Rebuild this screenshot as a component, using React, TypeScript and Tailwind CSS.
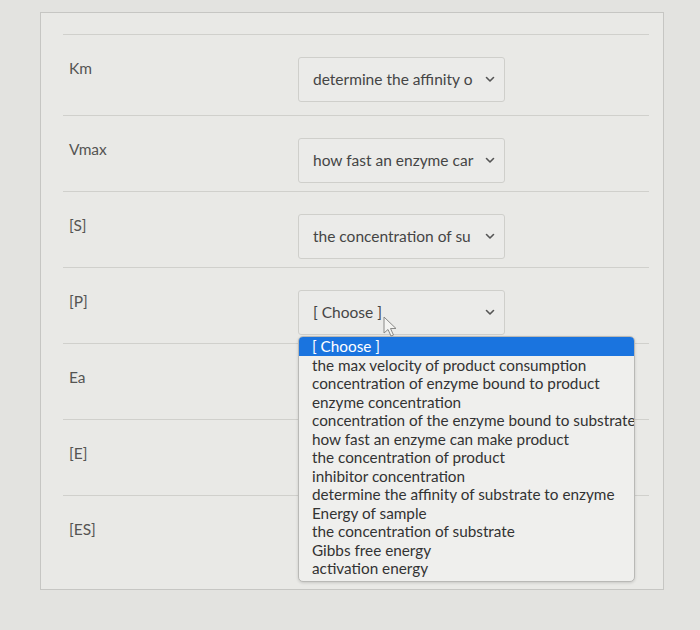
import React from "react";

const rows = [
  { label: "Km", value: "determine the affinity o" },
  { label: "Vmax", value: "how fast an enzyme car" },
  { label: "[S]", value: "the concentration of su" },
  { label: "[P]", value: "[ Choose ]", open: true },
  { label: "Ea" },
  { label: "[E]" },
  { label: "[ES]" },
];

const options = [
  "[ Choose ]",
  "the max velocity of product consumption",
  "concentration of enzyme bound to product",
  "enzyme concentration",
  "concentration of the enzyme bound to substrate",
  "how fast an enzyme can make product",
  "the concentration of product",
  "inhibitor concentration",
  "determine the affinity of substrate to enzyme",
  "Energy of sample",
  "the concentration of substrate",
  "Gibbs free energy",
  "activation energy",
];

function Chevron() {
  return (
    <svg width="10" height="7" viewBox="0 0 10 7" className="shrink-0">
      <path d="M1.5 1.5 L5 5 L8.5 1.5" fill="none" stroke="#555" strokeWidth="1.6" strokeLinecap="round" strokeLinejoin="round" />
    </svg>
  );
}

function Cursor() {
  return (
    <svg width="16" height="22" viewBox="0 0 16 22" className="absolute left-[85px] top-[26px] z-20">
      <path d="M1 1 L1 17 L5 13.5 L8 20 L10.5 19 L7.5 12.5 L13 12.5 Z" fill="#f4f4f2" stroke="#8a8a88" strokeWidth="1" strokeLinejoin="round" />
    </svg>
  );
}

function Select({ value, open }: { value: string; open?: boolean }) {
  return (
    <div className="relative w-[207px]">
      <div className="flex h-[45px] items-center justify-between rounded-[3px] border border-[#cfcfcb] bg-[#ebebe9] pl-[14px] pr-[9px] text-[15.5px] text-[#454545]">
        <span className="whitespace-nowrap">{value}</span>
        <Chevron />
      </div>
      {open && (
        <>
          <Cursor />
          <div className="absolute left-0 top-[46px] z-10 w-[337px] overflow-hidden rounded-[5px] border border-[#b9b9b6] bg-[#efefed] pb-[3px] shadow-[0_1px_3px_rgba(0,0,0,0.15)]">
            {options.map((o, i) => (
              <div
                key={o}
                className={
                  i === 0
                    ? "h-[18.5px] bg-[#1a74df] pl-[13px] text-[15.3px] leading-[18.5px] text-white"
                    : "h-[18.5px] whitespace-nowrap pl-[13px] text-[15.3px] leading-[18.5px] text-[#333333]"
                }
              >
                {o}
              </div>
            ))}
          </div>
        </>
      )}
    </div>
  );
}

export default function App() {
  return (
    <div className="min-h-[630px] w-[700px] bg-[#e3e3e0] pt-[12px] font-['Lato','Noto_Sans',sans-serif]">
      <div className="ml-[40px] h-[578px] w-[624px] border border-[#c6c6c3] bg-[#e9e9e6] pl-[22px] pr-[14px] pt-[21px]">
        {rows.map((r, i) => (
          <div
            key={r.label}
            className={
              "flex border-t border-[#d0d0cc] " + (i === 0 ? "h-[81px]" : "h-[76px]")
            }
          >
            <div className="w-[235px] pl-[6px] pt-[23px] text-[15.5px] leading-[20px] text-[#555553]">{r.label}</div>
            {r.value && (
              <div className="pt-[22px]">
                <Select value={r.value} open={r.open} />
              </div>
            )}
          </div>
        ))}
      </div>
    </div>
  );
}
